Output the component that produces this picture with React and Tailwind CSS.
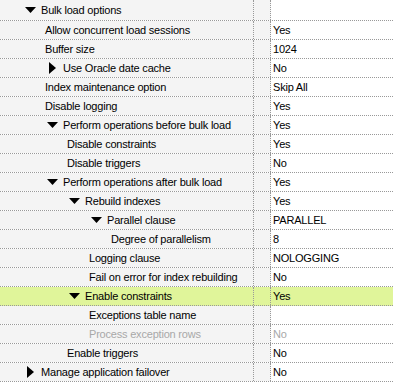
import React from 'react';

const rows = [
  { label: 'Bulk load options', level: 0, toggle: 'open', value: '' },
  { label: 'Allow concurrent load sessions', level: 1, value: 'Yes' },
  { label: 'Buffer size', level: 1, value: '1024' },
  { label: 'Use Oracle date cache', level: 1, toggle: 'closed', value: 'No' },
  { label: 'Index maintenance option', level: 1, value: 'Skip All' },
  { label: 'Disable logging', level: 1, value: 'Yes' },
  { label: 'Perform operations before bulk load', level: 1, toggle: 'open', value: 'Yes' },
  { label: 'Disable constraints', level: 2, value: 'Yes' },
  { label: 'Disable triggers', level: 2, value: 'No' },
  { label: 'Perform operations after bulk load', level: 1, toggle: 'open', value: 'Yes' },
  { label: 'Rebuild indexes', level: 2, toggle: 'open', value: 'Yes' },
  { label: 'Parallel clause', level: 3, toggle: 'open', value: 'PARALLEL' },
  { label: 'Degree of parallelism', level: 4, value: '8' },
  { label: 'Logging clause', level: 3, value: 'NOLOGGING' },
  { label: 'Fail on error for index rebuilding', level: 3, value: 'No' },
  { label: 'Enable constraints', level: 2, toggle: 'open', value: 'Yes', selected: true },
  { label: 'Exceptions table name', level: 3, value: '' },
  { label: 'Process exception rows', level: 3, value: 'No', disabled: true },
  { label: 'Enable triggers', level: 2, value: 'No' },
  { label: 'Manage application failover', level: 0, toggle: 'closed', value: 'No' },
];

// left padding per level, written out so tailwind picks them up
const togglePad = ['pl-[19px]', 'pl-[41px]', 'pl-[63px]', 'pl-[85px]', 'pl-[107px]'];
const leafPad = ['pl-[23px]', 'pl-[45px]', 'pl-[67px]', 'pl-[89px]', 'pl-[111px]'];

function Toggle({ state }) {
  return (
    <span className="flex w-[22px] shrink-0 items-center justify-center">
      {state === 'open' ? (
        <svg width="11" height="6" viewBox="0 0 11 6">
          <polygon points="0,0 11,0 5.5,6" fill="#000" />
        </svg>
      ) : (
        <svg width="7" height="12" viewBox="0 0 7 12">
          <polygon points="0,0 7,6 0,12" fill="#000" />
        </svg>
      )}
    </span>
  );
}

function Row({ row, first }) {
  const text = row.disabled ? 'text-[#a8a8a8]' : 'text-black';
  const bg = row.selected ? 'bg-[#e0f59a]' : 'bg-[#f4f4f4]';
  return (
    <div
      className={`flex border-b border-dotted border-[#999] ${first ? 'h-[21px]' : 'h-[19px]'} ${
        row.selected ? 'bg-[#e0f59a]' : 'bg-white'
      }`}
    >
      <div
        className={`flex w-[254px] shrink-0 items-center overflow-hidden whitespace-nowrap border-r border-dotted border-[#999] ${bg} ${
          row.toggle ? togglePad[row.level] : leafPad[row.level]
        } ${text}`}
      >
        {row.toggle && <Toggle state={row.toggle} />}
        <span className="pt-[1px]">{row.label}</span>
      </div>
      <div className={`w-[17px] shrink-0 border-r border-dotted border-[#999] ${bg}`} />
      <div className={`flex flex-1 items-center whitespace-nowrap pl-[2px] pt-[1px] ${text}`}>{row.value}</div>
    </div>
  );
}

export default function App() {
  return (
    <div className="h-[383px] w-[393px] overflow-hidden bg-white font-['Liberation_Sans',Arial,sans-serif] text-[11px] leading-none tracking-[-0.2px]">
      {rows.map((row, i) => (
        <Row key={row.label} row={row} first={i === 0} />
      ))}
    </div>
  );
}
